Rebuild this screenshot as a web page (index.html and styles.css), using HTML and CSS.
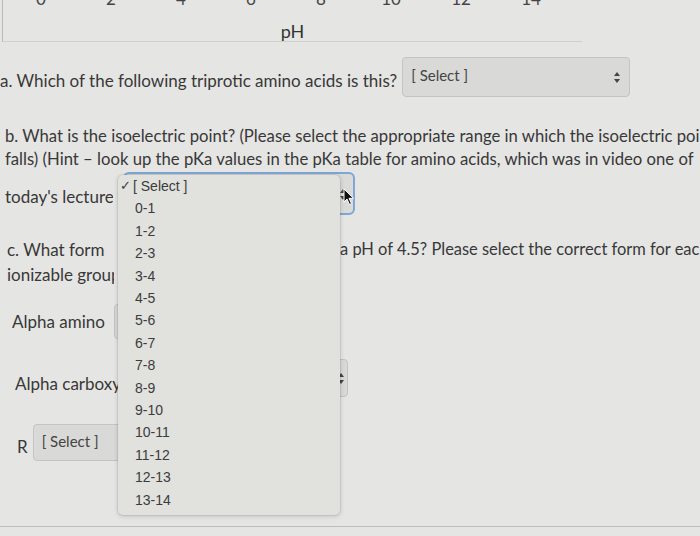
FILE: index.html
```html
<!DOCTYPE html>
<html>
<head>
<meta charset="utf-8">
<link rel="stylesheet" href="styles.css">
</head>
<body>
<div class="page">
  <div class="axis">
    <div class="ticks">
      <span>0</span><span>2</span><span>4</span><span>6</span><span>8</span><span>10</span><span>12</span><span>14</span>
    </div>
    <div class="xlabel">pH</div>
  </div>

  <div class="qa">
    <span class="text">a. Which of the following triprotic amino acids is this?</span>
    <div class="select wide">
      <span class="sel-text">[ Select ]</span>
      <span class="arrows"></span>
    </div>
  </div>

  <div class="qb">
    <div class="line">b. What is the isoelectric point? (Please select the appropriate range in which the isoelectric point</div>
    <div class="line">falls) (Hint – look up the pKa values in the pKa table for amino acids, which was in video one of</div>
    <div class="brow">
      <span class="text">today's lecture)</span>
      <div class="select focused">
        <span class="arrows"></span>
        <svg class="cursor" width="12" height="18" viewBox="0 0 12 18"><path d="M1 1 L1 14 L4 11 L6.5 16.5 L8.5 15.6 L6 10.3 L10.5 10.3 Z" fill="#111" stroke="#fff" stroke-width="1"/></svg>
      </div>
    </div>
  </div>

  <div class="qc">
    <div class="cline"><span class="cleft"><span class="clip c1">c. What form of each</span></span><span class="cright">a pH of 4.5? Please select the correct form for each</span></div>
    <div class="cline"><span class="cleft"><span class="clip c2">ionizable group below.</span></span></div>
  </div>

  <div class="grow g1">
    <span class="glabel">Alpha amino</span>
    <div class="select gsel1"></div>
  </div>
  <div class="grow g2">
    <span class="glabel">Alpha carboxyl</span>
    <div class="select gsel2"><span class="arrows"></span></div>
  </div>
  <div class="grow g3">
    <span class="glabel">R</span>
    <div class="select gsel3"><span class="sel-text">[ Select ]</span></div>
  </div>

  <div class="bottomline"></div>

  <div class="menu">
    <div class="item checked"><span class="check">✓</span>[ Select ]</div>
    <div class="item">0-1</div>
    <div class="item">1-2</div>
    <div class="item">2-3</div>
    <div class="item">3-4</div>
    <div class="item">4-5</div>
    <div class="item">5-6</div>
    <div class="item">6-7</div>
    <div class="item">7-8</div>
    <div class="item">8-9</div>
    <div class="item">9-10</div>
    <div class="item">10-11</div>
    <div class="item">11-12</div>
    <div class="item">12-13</div>
    <div class="item">13-14</div>
  </div>
</div>
</body>
</html>
```

FILE: styles.css
```css
html, body {
  margin: 0;
  padding: 0;
}
body {
  background: #e5e5e3;
  width: 700px;
  height: 536px;
  overflow: hidden;
  font-family: Lato, "Noto Sans", sans-serif;
  color: #383838;
  font-size: 17px;
}
.page {
  position: relative;
  width: 700px;
  height: 536px;
  overflow: hidden;
}
.axis {
  width: 580px;
  height: 42px;
  border-left: 1px solid #b9b9b6;
  border-bottom: 1px solid #cfcfcc;
  margin-left: 2px;
  box-sizing: border-box;
}
.ticks {
  height: 8px;
  overflow: hidden;
  display: flex;
  padding-left: 3px;
}
.ticks span {
  width: 70px;
  text-align: center;
  font-size: 17px;
  line-height: 17px;
  margin-top: -10px;
  color: #444;
}
.xlabel {
  text-align: center;
  font-size: 18px;
  line-height: 20px;
  margin-top: 13px;
  color: #333;
}
.text {
  white-space: nowrap;
}
.qa {
  display: flex;
  align-items: center;
  gap: 5px;
  padding-top: 15px;
  height: 40px;
}
.qa .text {
  padding-top: 6px;
}
.select {
  box-sizing: border-box;
  background: #d9d9d7;
  border: 1px solid #c4c4c1;
  border-radius: 4px;
  position: relative;
  display: flex;
  align-items: center;
  flex-shrink: 0;
}
.wide {
  width: 228px;
  height: 40px;
  padding-left: 8px;
}
.sel-text {
  font-size: 15px;
  color: #444;
  margin-top: -4px;
}
.arrows {
  position: absolute;
  right: 9px;
  top: 50%;
  width: 6px;
  height: 11px;
  margin-top: -5px;
}
.arrows::before, .arrows::after {
  content: "";
  position: absolute;
  left: 0;
  border-left: 3px solid transparent;
  border-right: 3px solid transparent;
}
.arrows::before {
  top: 0;
  border-bottom: 4px solid #444;
}
.arrows::after {
  bottom: 0;
  border-top: 4px solid #444;
}
.qb {
  margin-top: 28px;
  padding-left: 5px;
  font-size: 16.7px;
}
.line {
  white-space: nowrap;
  line-height: 23px;
}
.brow {
  display: flex;
  align-items: center;
  height: 43px;
  margin-top: 1px;
  font-size: 17px;
}
.brow .text {
  width: 108px;
  flex-shrink: 0;
  overflow: hidden;
  padding-top: 6px;
}
.focused {
  width: 232px;
  height: 43px;
  margin-left: 10px;
  border: 2px solid #7ea6d6;
  border-radius: 6px;
  background: #dadad8;
}
.focused .arrows {
  right: 7px;
}
.cursor {
  position: absolute;
  right: -2px;
  top: 14px;
}
.qc {
  margin-top: 22px;
  padding-left: 7px;
}
.cline {
  display: flex;
  white-space: nowrap;
  line-height: 25px;
  overflow: hidden;
}
.cleft {
  width: 333px;
  flex-shrink: 0;
}
.cright {
  font-size: 16.45px;
}
.clip {
  display: inline-block;
  overflow: hidden;
  vertical-align: top;
}
.c1 {
  width: 102px;
}
.c2 {
  width: 107px;
}
.grow {
  display: flex;
  align-items: center;
}
.glabel {
  white-space: nowrap;
  flex-shrink: 0;
}
.g1 {
  margin-top: 17px;
  padding-left: 12px;
  height: 35px;
  gap: 9px;
}
.gsel1 {
  width: 200px;
  height: 35px;
}
.g2 {
  margin-top: 20px;
  padding-left: 15px;
  height: 38px;
}
.g2 .glabel {
  width: 103px;
  overflow: hidden;
  padding-top: 10px;
}
.gsel2 {
  width: 230px;
  height: 38px;
}
.gsel2 .arrows {
  right: 3px;
}
.g3 {
  margin-top: 27px;
  padding-left: 17px;
  height: 37px;
  gap: 5px;
}
.g3 .glabel {
  padding-top: 8px;
}
.gsel3 {
  width: 200px;
  height: 37px;
  padding-left: 8px;
}
.bottomline {
  position: absolute;
  left: 0;
  right: 0;
  top: 526px;
  border-top: 1px solid #bdbdba;
}
.menu {
  position: absolute;
  left: 118px;
  top: 175px;
  width: 222px;
  height: 340px;
  box-sizing: border-box;
  background: #e1e1de;
  border-radius: 5px;
  box-shadow: 0 1px 5px rgba(0,0,0,0.18), 0 0 0 1px rgba(0,0,0,0.06);
  font-family: "Liberation Sans", Arial, sans-serif;
  font-size: 14px;
  color: #3c3c3c;
}
.item {
  line-height: 22.4px;
  padding-left: 17px;
  position: relative;
}
.checked {
  padding-left: 15px;
}
.check {
  position: absolute;
  left: 2px;
  font-size: 13px;
}
```
